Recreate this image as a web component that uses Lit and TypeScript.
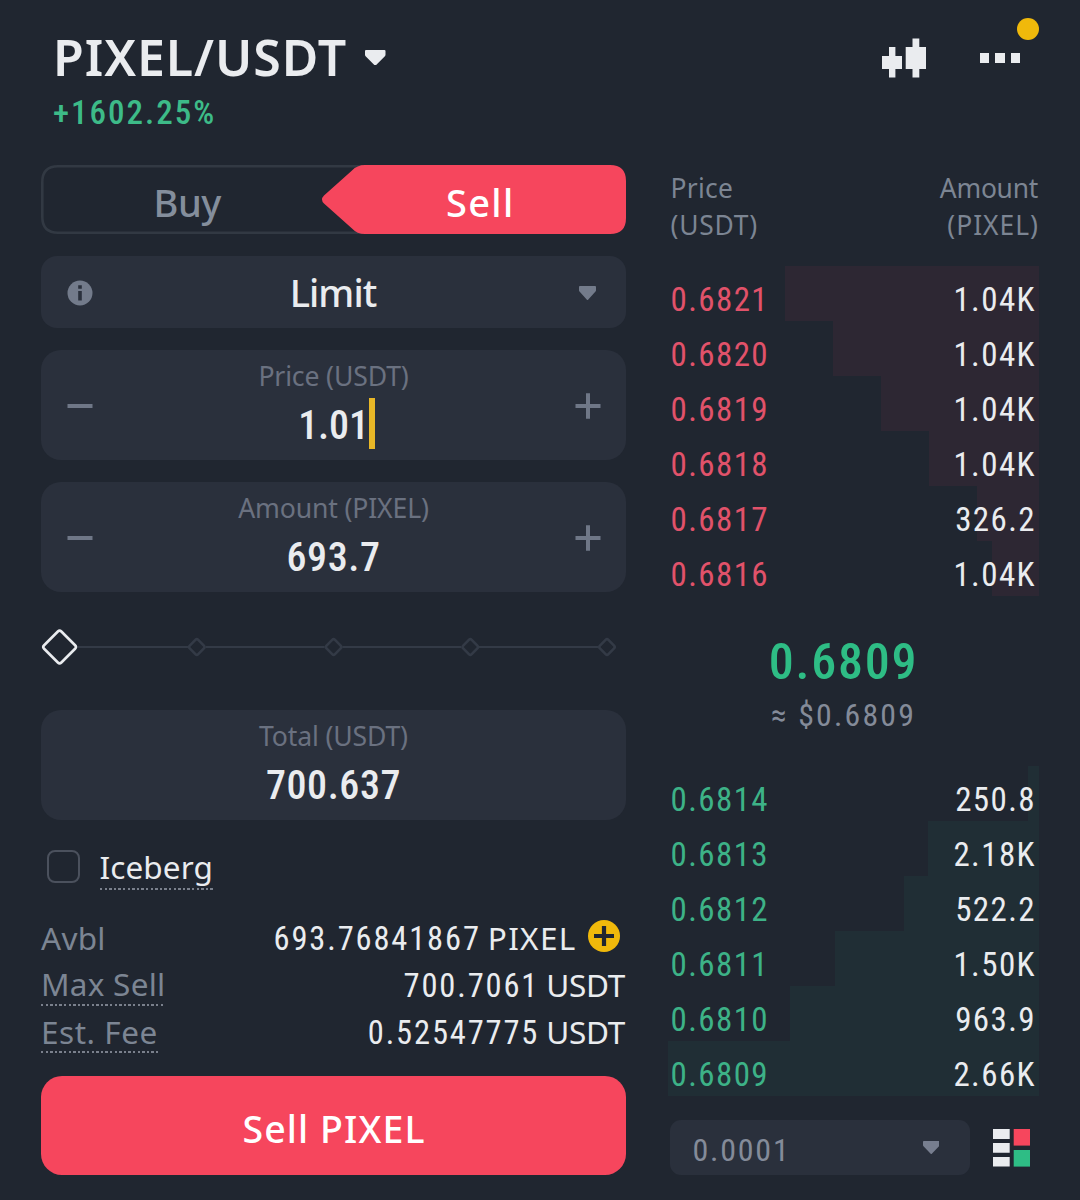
import { LitElement, html, css, svg, nothing } from 'lit';
import { customElement, property } from 'lit/decorators.js';

interface Level {
  price: string;
  amount: string;
  /** cumulative depth as a percentage of the book width */
  depth: number;
}

const ASKS: Level[] = [
  { price: '0.6821', amount: '1.04K', depth: 68.5 },
  { price: '0.6820', amount: '1.04K', depth: 55.5 },
  { price: '0.6819', amount: '1.04K', depth: 42.5 },
  { price: '0.6818', amount: '1.04K', depth: 29.6 },
  { price: '0.6817', amount: '326.2', depth: 16.8 },
  { price: '0.6816', amount: '1.04K', depth: 12.7 },
];

const BIDS: Level[] = [
  { price: '0.6814', amount: '250.8', depth: 3 },
  { price: '0.6813', amount: '2.18K', depth: 29.9 },
  { price: '0.6812', amount: '522.2', depth: 36.4 },
  { price: '0.6811', amount: '1.50K', depth: 55 },
  { price: '0.6810', amount: '963.9', depth: 67.1 },
  { price: '0.6809', amount: '2.66K', depth: 100 },
];

const caret = (cls: string, w: number, h: number) => html`
  <svg class=${cls} width=${w} height=${h} viewBox="0 0 20 15" preserveAspectRatio="none">
    <path d="M1 0H19Q20 0 20 1V4.6Q20 5.4 19.4 6L10.7 14.7Q10 15.3 9.3 14.7L.6 6Q0 5.4 0 4.6V1Q0 0 1 0Z" fill="currentColor" />
  </svg>`;

const minusIcon = html`
  <svg class="step" width="26" height="26" viewBox="0 0 26 26">
    <path d="M.5 13H25.5" stroke="currentColor" stroke-width="4" />
  </svg>`;

const plusIcon = html`
  <svg class="step" width="26" height="26" viewBox="0 0 26 26">
    <path d="M.5 13H25.5M13 .2V25.8" stroke="currentColor" stroke-width="4" />
  </svg>`;

@customElement('pair-header')
export class PairHeader extends LitElement {
  static styles = css`
    :host {
      display: flex;
      justify-content: space-between;
      height: 165px;
      padding: 27px 60px 0 53px;
      box-sizing: border-box;
    }
    .name {
      display: flex;
      align-items: center;
      height: 60px;
      gap: 18px;
      font: 600 50px/60px 'Noto Sans', sans-serif;
      letter-spacing: 0.95px;
      color: #eaecef;
    }
    .caret {
      margin-top: 1px;
    }
    .change {
      margin-top: 6px;
      font: 500 33px/40px 'Roboto Condensed', Roboto, sans-serif;
      letter-spacing: 2px;
      color: #3dbb88;
    }
    .actions {
      display: flex;
      align-items: flex-start;
      gap: 54px;
      padding-top: 11px;
    }
    .more {
      position: relative;
      display: flex;
      gap: 6px;
      margin-top: 15px;
    }
    .more i {
      width: 9.4px;
      height: 9.6px;
      background: #eaecef;
    }
    .badge {
      position: absolute;
      right: -19px;
      top: -35px;
      width: 22px;
      height: 22px;
      border-radius: 50%;
      background: #f0b90b;
    }
  `;

  render() {
    return html`
      <div>
        <div class="name"><span>PIXEL/USDT</span>${caret('caret', 20.5, 15.5)}</div>
        <div class="change">+1602.25%</div>
      </div>
      <div class="actions">
        <svg width="44" height="40" viewBox="0 0 44 40" fill="#eaecef">
          <path d="M7 9h6.400v9H20v13h-6.600v8.500H7V31H0V18h7z" />
          <path d="M30.500 .5h6.800V9H44v22h-6.700v8.500h-6.800V31h-6.800V9h6.800z" />
        </svg>
        <div class="more"><i></i><i></i><i></i><span class="badge"></span></div>
      </div>
    `;
  }
}

@customElement('number-field')
export class NumberField extends LitElement {
  @property() label = '';
  @property() value = '';
  @property({ type: Boolean }) stepper = false;
  @property({ type: Boolean }) active = false;

  static styles = css`
    :host {
      display: flex;
      justify-content: center;
      align-items: center;
      height: 110px;
      padding: 0 25px 0 26px;
      box-sizing: border-box;
      border-radius: 20px;
      background: #2a303c;
    }
    .step {
      flex: none;
      margin-top: 1px;
      color: #6f7787;
    }
    .body {
      flex: 1;
      height: 110px;
      padding-right: 1px;
      text-align: center;
    }
    .label {
      margin-top: 10px;
      font: 400 26.6px/32px 'Noto Sans', sans-serif;
      letter-spacing: -0.15px;
      color: #6a7180;
    }
    .value {
      position: relative;
      display: inline-block;
      margin-top: 9px;
      font: 500 40px/50px 'Roboto Condensed', Roboto, sans-serif;
      letter-spacing: 0.55px;
      color: #eaecef;
    }
    .value.active {
      letter-spacing: -0.1px;
    }
    .cursor {
      position: absolute;
      left: 100%;
      margin-left: 0;
      top: -3px;
      width: 6px;
      height: 51px;
      background: #e8b727;
    }
  `;

  render() {
    return html`
      ${this.stepper ? minusIcon : nothing}
      <div class="body">
        <div class="label">${this.label}</div>
        <div class="value ${this.active ? 'active' : ''}">${this.value}${this.active ? html`<span class="cursor"></span>` : nothing}</div>
      </div>
      ${this.stepper ? plusIcon : nothing}
    `;
  }
}

@customElement('order-form')
export class OrderForm extends LitElement {
  static styles = css`
    :host {
      display: flex;
      flex-direction: column;
      width: 585px;
      font-family: 'Noto Sans', sans-serif;
      color: #eaecef;
    }
    .sides {
      position: relative;
      display: grid;
      grid-template-columns: 1fr 1fr;
      height: 69px;
      font-size: 38px;
      font-weight: 500;
      line-height: 75px;
      text-align: center;
    }
    .shape {
      position: absolute;
      left: 0;
      top: 0;
    }
    .side {
      position: relative;
    }
    .buy {
      color: #848e9c;
      letter-spacing: -0.34px;
    }
    .sell {
      color: #fff;
      letter-spacing: 1.3px;
      padding-left: 1px;
    }
    .type {
      display: flex;
      align-items: center;
      justify-content: space-between;
      height: 72px;
      margin-top: 22px;
      padding: 0 30px 0 26px;
      box-sizing: border-box;
      border-radius: 16px;
      background: #2a303c;
      color: #737b8b;
    }
    .info {
      margin-top: 2px;
    }
    .type-name {
      font-size: 38px;
      font-weight: 500;
      line-height: 72px;
      letter-spacing: -0.95px;
      padding-right: 6px;
      color: #eaecef;
    }
    number-field {
      margin-top: 22px;
    }
    .total {
      margin-top: 0;
    }
    .slider {
      display: block;
    }
    .iceberg {
      display: flex;
      height: 44px;
      margin-top: 26px;
      padding-left: 5.5px;
    }
    .check {
      width: 33px;
      height: 33px;
      margin: 4px 20px 0 0;
      box-sizing: border-box;
      border: 2.5px solid #4b515d;
      border-radius: 8px;
    }
    .dotted {
      background: repeating-linear-gradient(90deg, #7a808c 0 2.4px, transparent 2.4px 4.6px) left bottom / 100% 2px no-repeat;
    }
    .iceberg-name {
      height: 43.5px;
      font-size: 31.5px;
      line-height: 42px;
      letter-spacing: 0.1px;
    }
    .facts {
      margin-top: 26px;
    }
    .fact {
      display: flex;
      justify-content: space-between;
      height: 47px;
      font-size: 31.5px;
      line-height: 43px;
    }
    .key {
      height: 43px;
      color: #7c8593;
    }
    .avbl {
      letter-spacing: 0.27px;
    }
    .max {
      line-height: 42px;
      letter-spacing: 0.25px;
    }
    .fee {
      letter-spacing: 0.55px;
    }
    .val {
      display: flex;
      align-items: baseline;
      gap: 7px;
      padding-right: 1px;
    }
    .num {
      font: 400 32.5px/44px 'Roboto Condensed', Roboto, sans-serif;
      letter-spacing: 1.85px;
    }
    .usdt {
      letter-spacing: -0.29px;
    }
    .pixel {
      letter-spacing: 1.3px;
    }
    .avail {
      padding-right: 6px;
    }
    .add {
      align-self: flex-start;
      margin: 4px 0 0 4.5px;
    }
    .submit {
      height: 99px;
      margin-top: 19px;
      border-radius: 21px;
      background: #f6465d;
      color: #fff;
      font-size: 37.5px;
      font-weight: 500;
      line-height: 105px;
      letter-spacing: 1.1px;
      text-indent: 1px;
      text-align: center;
    }
  `;

  private renderSlider() {
    const stops = [155.8, 292.6, 429.3, 566];
    return html`
      <svg class="slider" width="585" height="118" viewBox="0 0 585 118" fill="none">
        <path d="M37 55H147M165 55H283.500M301.500 55H420M438 55H557" stroke="#333a46" stroke-width="2" />
        ${stops.map(
          (x) => svg`<rect x=${x - 6} y="49" width="12" height="12" rx="2" transform=${`rotate(45 ${x} 55)`} stroke="#333a46" stroke-width="2.6" />`,
        )}
        <rect x="6.400" y="42.800" width="24.400" height="24.400" rx="2.500" transform="rotate(45 18.6 55)" stroke="#eaecef" stroke-width="2.600" />
      </svg>
    `;
  }

  render() {
    return html`
      <div class="sides">
        <svg class="shape" width="585" height="69" viewBox="0 0 585 69">
          <path d="M330 1.300H17Q1.300 1.300 1.300 17V52Q1.300 67.700 17 67.700H330" fill="none" stroke="#323943" stroke-width="2.600" />
          <path d="M324 0H569Q585 0 585 16V53Q585 69 569 69H324Q316 69 311 63.500L283 38.500Q279 34.500 283 30.500L311 5.500Q316 0 324 0Z" fill="#f6465d" />
        </svg>
        <div class="side buy">Buy</div>
        <div class="side sell">Sell</div>
      </div>

      <div class="type">
        <svg class="info" width="26" height="26" viewBox="0 0 26 26">
          <circle cx="13" cy="13" r="12.500" fill="currentColor" />
          <path d="M11.200 5.300h3.600v3.400h-3.600zM11.200 11h3.600v9.400h-3.600z" fill="#2a303c" />
        </svg>
        <span class="type-name">Limit</span>
        ${caret('info', 17, 14)}
      </div>

      <number-field label="Price (USDT)" value="1.01" stepper active></number-field>
      <number-field label="Amount (PIXEL)" value="693.7" stepper></number-field>
      ${this.renderSlider()}
      <number-field class="total" label="Total (USDT)" value="700.637"></number-field>

      <div class="iceberg">
        <span class="check"></span>
        <span class="iceberg-name dotted">Iceberg</span>
      </div>

      <div class="facts">
        <div class="fact">
          <span class="key avbl">Avbl</span>
          <span class="val avail">
            <span class="num">693.76841867</span><span class="pixel">PIXEL</span>
            <svg class="add" width="32" height="32" viewBox="0 0 32 32">
              <circle cx="16" cy="16" r="16" fill="#f0b90b" />
              <path d="M6 16H26M16 6V26" stroke="#202630" stroke-width="4.200" />
            </svg>
          </span>
        </div>
        <div class="fact">
          <span class="key max dotted">Max Sell</span>
          <span class="val"><span class="num">700.7061</span><span class="usdt">USDT</span></span>
        </div>
        <div class="fact">
          <span class="key fee dotted">Est. Fee</span>
          <span class="val"><span class="num">0.52547775</span><span class="usdt">USDT</span></span>
        </div>
      </div>

      <div class="submit">Sell PIXEL</div>
    `;
  }
}

@customElement('order-book')
export class OrderBook extends LitElement {
  static styles = css`
    :host {
      display: flex;
      flex-direction: column;
      width: 371px;
      font-family: 'Roboto Condensed', Roboto, sans-serif;
    }
    .head {
      display: flex;
      justify-content: space-between;
      height: 101px;
      padding: 5px 1px 0 2.5px;
      box-sizing: border-box;
      font: 400 26.4px/37px 'Noto Sans', sans-serif;
      color: #7c8593;
    }
    .head div div {
      white-space: nowrap;
    }
    .end {
      text-align: right;
    }
    .ls-price {
      letter-spacing: 0.3px;
    }
    .ls-usdt {
      letter-spacing: 0.8px;
    }
    .ls-amount {
      letter-spacing: -0.25px;
    }
    .ls-pixel {
      letter-spacing: 1px;
      margin-right: -1px;
    }
    .level {
      position: relative;
      display: flex;
      justify-content: space-between;
      height: 55px;
      padding: 0 3px 0 2.5px;
      font-size: 33px;
      line-height: 67px;
    }
    .bar {
      position: absolute;
      right: 0;
      top: 0;
      height: 55px;
    }
    .asks .bar {
      background: #2d2733;
    }
    .bids .bar {
      background: #202e35;
    }
    .price,
    .amount {
      position: relative;
      letter-spacing: 1.4px;
    }
    .asks .price {
      color: #e1526a;
    }
    .bids .price {
      color: #3db287;
    }
    .amount {
      color: #eaecef;
    }
    .mid {
      display: flex;
      flex-direction: column;
      align-items: center;
      height: 170px;
      padding: 35.5px 20px 0 0;
      box-sizing: border-box;
    }
    .last {
      font-size: 50px;
      font-weight: 500;
      line-height: 60px;
      letter-spacing: 1.8px;
      color: #2ebd85;
    }
    .fiat {
      margin-top: 3.5px;
      font-size: 31.8px;
      line-height: 40px;
      letter-spacing: 2.2px;
      color: #848b99;
    }
    .foot {
      display: flex;
      align-items: center;
      gap: 23px;
      height: 55px;
      margin: 24px 0 0 2px;
    }
    .tick {
      display: flex;
      justify-content: space-between;
      align-items: center;
      width: 300px;
      height: 55px;
      padding: 0 31px 0 22.5px;
      box-sizing: border-box;
      border-radius: 11px;
      background: #2a303c;
      color: #777e8f;
    }
    .tick-value {
      font-size: 32px;
      line-height: 60px;
      padding-top: 5px;
      letter-spacing: 1.75px;
      color: #848b99;
    }
  `;

  private level(l: Level) {
    return html`
      <div class="level">
        <span class="bar" style="width:${l.depth}%"></span>
        <span class="price">${l.price}</span>
        <span class="amount">${l.amount}</span>
      </div>
    `;
  }

  render() {
    return html`
      <div class="head">
        <div>
          <div class="ls-price">Price</div>
          <div class="ls-usdt">(USDT)</div>
        </div>
        <div class="end">
          <div class="ls-amount">Amount</div>
          <div class="ls-pixel">(PIXEL)</div>
        </div>
      </div>
      <div class="asks">${ASKS.map((l) => this.level(l))}</div>
      <div class="mid">
        <div class="last">0.6809</div>
        <div class="fiat">≈ $0.6809</div>
      </div>
      <div class="bids">${BIDS.map((l) => this.level(l))}</div>
      <div class="foot">
        <div class="tick"><span class="tick-value">0.0001</span>${caret('', 16.5, 13)}</div>
        <svg width="37" height="38" viewBox="0 0 37 38">
          <path d="M0 0h16.700v10H0zM0 14h16.700v9.700H0zM0 28h16.700v9.600H0z" fill="#eaecef" />
          <path d="M20.700 0H37v16.600H20.700z" fill="#f6465d" />
          <path d="M20.700 21H37v16.600H20.700z" fill="#2ebd85" />
        </svg>
      </div>
    `;
  }
}

@customElement('app-root')
export class AppRoot extends LitElement {
  static styles = css`
    :host {
      display: block;
      width: 1080px;
      height: 1200px;
      overflow: hidden;
      background: #202630;
    }
    .columns {
      display: flex;
      gap: 42px;
      padding-left: 41px;
    }
  `;

  render() {
    return html`
      <pair-header></pair-header>
      <div class="columns">
        <order-form></order-form>
        <order-book></order-book>
      </div>
    `;
  }
}
